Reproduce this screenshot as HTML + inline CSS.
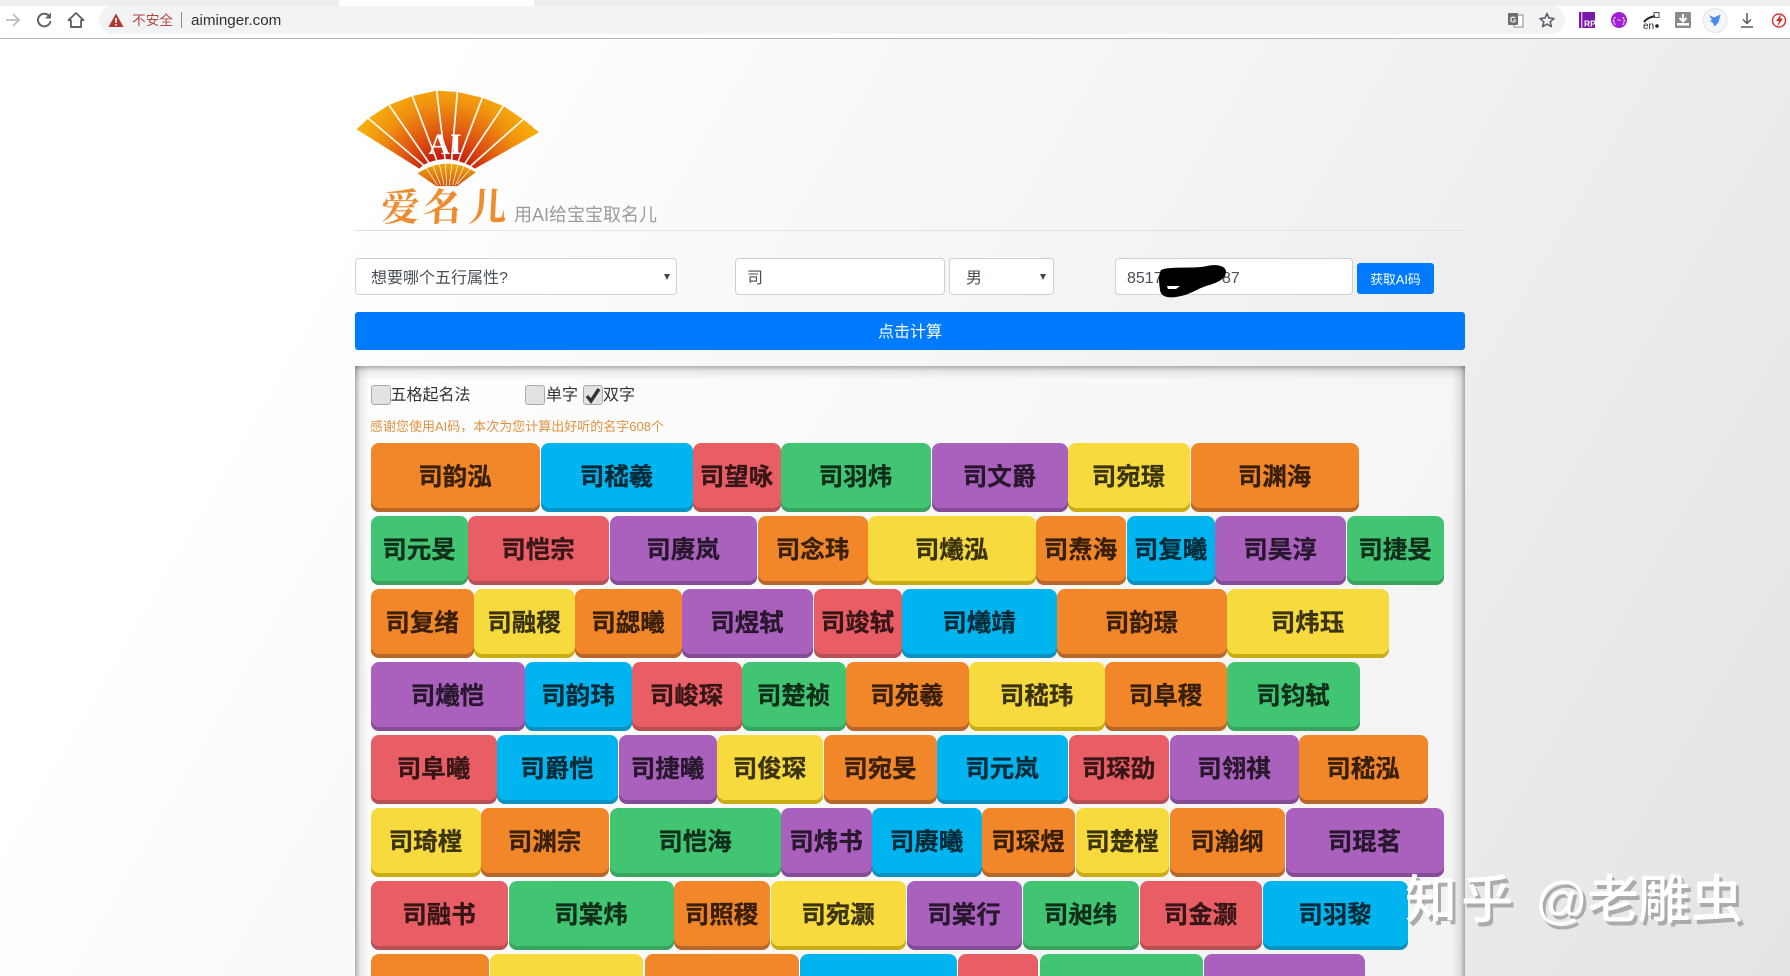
<!DOCTYPE html>
<html lang="zh"><head><meta charset="utf-8"><title>aiminger.com</title>
<style>
html,body{margin:0;padding:0;width:1790px;height:976px;overflow:hidden}
body{position:relative;background:#f4f4f4;font-family:"Liberation Sans","Noto Sans CJK SC",sans-serif;color:#495057}
div,span.a{position:absolute;box-sizing:border-box}
#root{left:0;top:0;width:1790px;height:976px;overflow:hidden;background:linear-gradient(120deg,#fff 20%,#e4e4e4 100%)}
.t{top:0;height:69px;border-radius:8px;display:flex;align-items:center;justify-content:center;font:bold 24.5px/1 "Liberation Sans","Noto Sans CJK SC",sans-serif;color:rgba(0,0,0,.76);-webkit-text-stroke:.35px rgba(0,0,0,.6);padding-top:1px;padding-right:1px;white-space:nowrap}
.O{background:#f28729;box-shadow:inset 0 -4px 0 #b8672a}
.C{background:#00b5ef;box-shadow:inset 0 -4px 0 #0a92c2}
.R{background:#e85e64;box-shadow:inset 0 -4px 0 #b94f54}
.G{background:#41c572;box-shadow:inset 0 -4px 0 #38a460}
.P{background:#a961bd;box-shadow:inset 0 -4px 0 #844c96}
.Y{background:#f6da3e;box-shadow:inset 0 -4px 0 #c9ad14}
.r{left:0;width:1790px;height:69px}
.l{height:22px;border-radius:8px 8px 0 0;box-shadow:none}
.f{background:#fff;border:1px solid #d0d0d0;border-radius:4px;top:258px;height:37px;font-size:16px;line-height:39px;color:#495057}
.tri{width:0;height:0;border-left:3.5px solid transparent;border-right:3.5px solid transparent;border-top:6px solid #444;top:274px}
.cb{width:20px;height:20px;top:385px;background:#e2e2e2;border:1px solid #a9a9a9;border-radius:3px}
.lb{top:385px;font-size:16px;line-height:22px;color:#333;white-space:nowrap}
.wm{top:863px;font:500 52px/76px "Liberation Sans","Noto Sans CJK SC",sans-serif;color:#fff;text-shadow:3px 4px 0 #ababab;white-space:nowrap}
</style></head><body><div id="root">

<!-- browser chrome -->
<div style="left:0;top:0;width:1790px;height:39px;background:#fff;border-bottom:1px solid #b6b6b6"></div>
<div style="left:0;top:0;width:339px;height:6px;background:#eceef0"></div>
<div style="left:534px;top:0;width:1256px;height:6px;background:#eceef0"></div>
<div style="left:99px;top:6px;width:1466px;height:28px;border-radius:14px;background:#f1f3f4"></div>

<svg style="position:absolute;left:0;top:0" width="100" height="39" viewBox="0 0 100 39" fill="none">
<path d="M6 20H19M13 14l6 6-6 6" stroke="#bcbcbc" stroke-width="1.7"/>
<path d="M49.5 16.5A6.3 6.3 0 1 0 50.5 21" stroke="#5f6368" stroke-width="2"/>
<path d="M51 12.5v6h-6z" fill="#5f6368"/>
<path d="M76 13l-7.5 7.2h2.4V27h10.2v-6.8h2.4z" stroke="#5f6368" stroke-width="1.9" stroke-linejoin="round"/>
</svg>
<svg style="position:absolute;left:108px;top:13px" width="16" height="15" viewBox="0 0 16 15"><path d="M8 0.5L15.5 14H.5z" fill="#b3352e"/><rect x="7.2" y="5" width="1.6" height="5" fill="#fff"/><rect x="7.2" y="11" width="1.6" height="1.6" fill="#fff"/></svg>
<span class="a" style="left:132px;top:12px;font-size:13.7px;line-height:18px;color:#b5463f;white-space:nowrap">不安全</span>
<div style="left:181px;top:12px;width:1px;height:16px;background:#8e8e8e"></div>
<span class="a" style="left:191px;top:11px;font-size:15.2px;line-height:20px;color:#303134;white-space:nowrap">aiminger.com</span>

<svg style="position:absolute;left:1500px;top:6px" width="290" height="30" viewBox="1500 6 290 30" fill="none">
<rect x="1514" y="15" width="9" height="12" fill="#fff" stroke="#8a8a8a"/><rect x="1508" y="13" width="10" height="12" rx="1" fill="#6e6e6e"/>
<text x="1510" y="22.500" font-family="Liberation Sans,sans-serif" font-size="8" font-weight="bold" fill="#fff">G</text>
<path d="M1547 13.5l2 4.6 5 .4-3.8 3.3 1.2 4.9-4.4-2.6-4.4 2.6 1.2-4.9-3.8-3.3 5-.4z" stroke="#5f6368" stroke-width="1.6" stroke-linejoin="round"/>
<rect x="1579" y="12" width="16" height="16" fill="#7a1aa8"/><rect x="1581" y="12" width="1.4" height="16" fill="#e9a6ff"/>
<text x="1584" y="26.5" font-family="Liberation Sans,sans-serif" font-weight="bold" font-size="8.5" fill="#fff">RP</text>
<circle cx="1619" cy="20" r="8" fill="#a01fd6"/><text x="1619" y="23" text-anchor="middle" font-family="Liberation Mono,monospace" font-size="8" fill="#fff">{~}</text>
<path d="M1644 22c3-4 7-5 11-6" stroke="#222" stroke-width="2"/><rect x="1654" y="12.500" width="5" height="5" stroke="#555"/><circle cx="1657" cy="26" r="1.800" fill="#222"/>
<text x="1643" y="29" font-family="Liberation Sans,sans-serif" font-size="10" fill="#222">en</text>
<rect x="1675" y="12" width="16" height="16" rx="1" fill="#8b8b8b"/><path d="M1683 14v7M1679.500 18l3.500 3.500 3.500-3.500" stroke="#fff" stroke-width="2"/><rect x="1677" y="23" width="12" height="2.500" fill="#fff"/>
<circle cx="1715" cy="20.500" r="12" fill="#f3f6fb" stroke="#e2e4ea"/><path d="M1709 15l5 2.500 6.500-3-2 8-4 4-1.500-3.500-3-2 2-1z" fill="#4a8df0"/>
<path d="M1747 13v10M1743 19.500l4 4 4-4M1741 27h12" stroke="#5a5a5a" stroke-width="1.500"/>
<circle cx="1779" cy="20.500" r="6.500" stroke="#d9393c" stroke-width="1.500"/><path d="M1782 13l-6 8h3l-2 6 6-8.500h-3z" fill="#d9262a"/>
</svg>

<!-- logo -->
<svg style="position:absolute;left:340px;top:70px" width="360" height="170" viewBox="0 0 1080 510" fill="none">
<defs>
<radialGradient id="g1" gradientUnits="userSpaceOnUse" cx="320" cy="330" r="290"><stop offset=".22" stop-color="#c4180f"/><stop offset=".5" stop-color="#e05510"/><stop offset=".8" stop-color="#f0920f"/><stop offset="1" stop-color="#f7aa0c"/></radialGradient>
<linearGradient id="g2" gradientUnits="userSpaceOnUse" x1="320" y1="265" x2="320" y2="350"><stop offset="0" stop-color="#f7bd0c"/><stop offset="1" stop-color="#d2550f"/></linearGradient>
</defs>
<path d="M50 178L85 145 147 105 217 78 290 62 352 66 427 83 490 108 550 148 597 187 405 296 392 288 375 280 355 273 335 268 315 267 290 270 266 277 250 285 238 296z" fill="url(#g1)"/>
<path d="M85 145L250 285M147 105L266 277M217 78L290 270M290 62L315 267M352 66L335 268M427 83L355 273M490 108L375 280M550 148L392 288" stroke="#fffdf5" stroke-width="5"/>
<path d="M230 310Q320 250 410 307L352 350H288z" fill="url(#g2)" stroke="#fff" stroke-width="3"/>
<path d="M258 293L292 345M277 283L302 345M297 278L312 345M316 276L320 348M336 277L328 346M354 282L338 345M372 290L346 345M390 298L352 342" stroke="#fff" stroke-width="2"/>
<text x="315" y="252" text-anchor="middle" font-family="Liberation Serif,serif" font-weight="bold" font-size="90" fill="#fff">AI</text>
<g font-family="Noto Serif CJK SC,serif" font-size="114" font-weight="700" fill="#ee8b30">
<text x="122" y="452" transform="skewX(-3) translate(24,0)">爱</text>
<text x="248" y="452" transform="skewX(-3) translate(24,0)">名</text>
<text x="384" y="452" transform="skewX(-3) translate(24,0)">儿</text>
</g>
</svg>
<span class="a" style="left:514px;top:202px;font-size:18px;line-height:26px;color:#9b9b9b;white-space:nowrap">用AI给宝宝取名儿</span>
<div style="left:355px;top:230px;width:1110px;height:1px;background:#e0e3e6"></div>

<!-- form -->
<div class="f" style="left:355px;width:322px;padding-left:15px">想要哪个五行属性?</div>
<div class="tri" style="left:664px"></div>
<div class="f" style="left:735px;width:210px;padding-left:11px">司</div>
<div class="f" style="left:949px;width:105px;padding-left:16px">男</div>
<div class="tri" style="left:1040px"></div>
<div class="f" style="left:1115px;width:238px"></div>
<span class="a" style="left:1127px;top:261px;font-size:16px;line-height:35px">8517</span>
<span class="a" style="left:1222px;top:261px;font-size:16px;line-height:35px">87</span>
<svg style="position:absolute;left:1155px;top:262px" width="80" height="40" viewBox="0 0 80 40"><path d="M6 8C14 4 40 7 52 4c8-2 19-1 19 6 0 7-9 11-20 14-9 3-15 8-25 10-8 2-20 3-21-6C4 20 3 14 6 8z" fill="#000"/><path d="M12 24h13l-4 3h-8z" fill="#fff"/></svg>
<div style="left:1357px;top:263px;width:77px;height:31px;background:#007bff;border-radius:3px;color:#fff;font-size:12.800px;line-height:34px;text-align:center">获取AI码</div>
<div style="left:355px;top:312px;width:1110px;height:38px;background:#007bff;border-radius:3px;color:#fff;font-size:16px;line-height:42px;text-align:center">点击计算</div>

<!-- panel: inner shadow on top/left/right only, ends at frame edge -->
<div style="left:355px;top:366px;width:1110px;height:610px;background:linear-gradient(to bottom,rgba(0,0,0,.3),rgba(0,0,0,.08) 5px,transparent 14px),linear-gradient(to right,rgba(0,0,0,.3),rgba(0,0,0,.08) 5px,transparent 14px),linear-gradient(to left,rgba(0,0,0,.3),rgba(0,0,0,.08) 5px,transparent 14px),rgba(255,255,255,.45)"></div>
<div class="cb" style="left:371px"></div>
<span class="a lb" style="left:390.5px">五格起名法</span>
<div class="cb" style="left:525px"></div>
<span class="a lb" style="left:546px">单字</span>
<div class="cb" style="left:583px"></div>
<svg style="position:absolute;left:583px;top:385px" width="20" height="20" viewBox="0 0 20 20"><path d="M4 11l4 5 8-12" stroke="#333" stroke-width="3.400" fill="none"/></svg>
<span class="a lb" style="left:603px">双字</span>
<span class="a" style="left:370px;top:417px;font-size:13px;line-height:20px;color:#e1913f;white-space:nowrap">感谢您使用AI码，本次为您计算出好听的名字608个</span>

<!-- tiles -->
<div class="r" style="top:443px">
<div class="t O" style="left:371px;width:169px">司韵泓</div><div class="t C" style="left:541px;width:152px">司嵇羲</div><div class="t R" style="left:693px;width:88px">司望咏</div><div class="t G" style="left:781px;width:150px">司羽炜</div><div class="t P" style="left:932px;width:136px">司文爵</div><div class="t Y" style="left:1068px;width:122px">司宛璟</div><div class="t O" style="left:1191px;width:168px">司渊海</div>
</div>
<div class="r" style="top:516px">
<div class="t G" style="left:371px;width:97px">司元旻</div><div class="t R" style="left:468px;width:141px">司恺宗</div><div class="t P" style="left:610px;width:147px">司赓岚</div><div class="t O" style="left:758px;width:110px">司念玮</div><div class="t Y" style="left:868px;width:168px">司爔泓</div><div class="t O" style="left:1036px;width:90px">司焘海</div><div class="t C" style="left:1127px;width:88px">司复曦</div><div class="t P" style="left:1215px;width:131px">司昊淳</div><div class="t G" style="left:1347px;width:97px">司捷旻</div>
</div>
<div class="r" style="top:589px">
<div class="t O" style="left:371px;width:103px">司复绪</div><div class="t Y" style="left:474px;width:101px">司融稷</div><div class="t O" style="left:575px;width:107px">司勰曦</div><div class="t P" style="left:682px;width:131px">司煜轼</div><div class="t R" style="left:814px;width:88px">司竣轼</div><div class="t C" style="left:902px;width:155px">司爔靖</div><div class="t O" style="left:1057px;width:170px">司韵璟</div><div class="t Y" style="left:1227px;width:162px">司炜珏</div>
</div>
<div class="r" style="top:662px">
<div class="t P" style="left:371px;width:154px">司爔恺</div><div class="t C" style="left:525px;width:107px">司韵玮</div><div class="t R" style="left:632px;width:110px">司峻琛</div><div class="t G" style="left:742px;width:104px">司楚祯</div><div class="t O" style="left:846px;width:123px">司苑羲</div><div class="t Y" style="left:969px;width:136px">司嵇玮</div><div class="t O" style="left:1105px;width:122px">司阜稷</div><div class="t G" style="left:1227px;width:133px">司钧轼</div>
</div>
<div class="r" style="top:735px">
<div class="t R" style="left:371px;width:126px">司阜曦</div><div class="t C" style="left:497px;width:121px">司爵恺</div><div class="t P" style="left:619px;width:98px">司捷曦</div><div class="t Y" style="left:717px;width:106px">司俊琛</div><div class="t O" style="left:824px;width:113px">司宛旻</div><div class="t C" style="left:937px;width:131px">司元岚</div><div class="t R" style="left:1069px;width:100px">司琛劭</div><div class="t P" style="left:1170px;width:129px">司翎祺</div><div class="t O" style="left:1299px;width:129px">司嵇泓</div>
</div>
<div class="r" style="top:808px">
<div class="t Y" style="left:371px;width:110px">司琦樘</div><div class="t O" style="left:481px;width:128px">司渊宗</div><div class="t G" style="left:610px;width:171px">司恺海</div><div class="t P" style="left:781px;width:91px">司炜书</div><div class="t C" style="left:872px;width:110px">司赓曦</div><div class="t O" style="left:982px;width:93px">司琛煜</div><div class="t Y" style="left:1076px;width:93px">司楚樘</div><div class="t O" style="left:1170px;width:115px">司瀚纲</div><div class="t P" style="left:1286px;width:158px">司琨茗</div>
</div>
<div class="r" style="top:881px">
<div class="t R" style="left:371px;width:137px">司融书</div><div class="t G" style="left:509px;width:165px">司棠炜</div><div class="t O" style="left:674px;width:96px">司照稷</div><div class="t Y" style="left:771px;width:135px">司宛灏</div><div class="t P" style="left:907px;width:115px">司棠行</div><div class="t G" style="left:1023px;width:116px">司昶纬</div><div class="t R" style="left:1140px;width:122px">司金灏</div><div class="t C" style="left:1263px;width:145px">司羽黎</div>
</div>
<div class="r" style="top:954px;height:22px">
<div class="t O l" style="left:371px;width:118px"></div><div class="t Y l" style="left:490px;width:153px"></div><div class="t O l" style="left:645px;width:154px"></div><div class="t C l" style="left:800px;width:157px"></div><div class="t R l" style="left:958px;width:80px"></div><div class="t G l" style="left:1040px;width:163px"></div><div class="t P l" style="left:1204px;width:161px"></div>
</div>

<!-- watermark -->
<span class="a wm" style="left:1405px">知</span>
<span class="a wm" style="left:1461px">乎</span>
<span class="a wm" style="left:1535px">@</span>
<span class="a wm" style="left:1587px">老</span>
<span class="a wm" style="left:1638px">雕</span>
<span class="a wm" style="left:1691px">虫</span>
</div></body></html>
